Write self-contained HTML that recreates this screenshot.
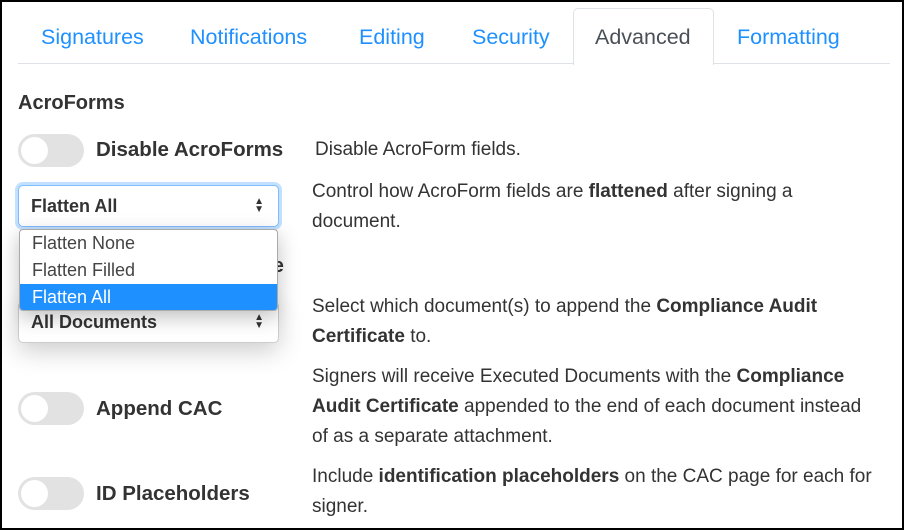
<!DOCTYPE html>
<html><head><style>
*{margin:0;padding:0;box-sizing:border-box}
body{width:907px;height:531px;background:#fff;font-family:"Liberation Sans",sans-serif;color:#212529;position:relative;overflow:hidden}
.frame{position:absolute;left:0;top:0;width:904px;height:530px;border:2px solid #000}
.a{position:absolute;white-space:nowrap}
.tab{font-size:21.5px;color:#1e90ff;top:25px}
.line{position:absolute;left:18px;top:63px;width:872px;height:1px;background:#dee2e6}
.act{position:absolute;left:573px;top:8px;width:141px;height:57px;border:1px solid #dee2e6;border-bottom:none;border-radius:5px 5px 0 0;background:#fff}
.tg{position:absolute;left:18px;width:66px;height:33px;border-radius:17px;background:#e2e2e2}
.tg::after{content:"";position:absolute;left:3px;top:3px;width:27px;height:27px;border-radius:50%;background:#fff}
.lbl{font-size:20.5px;font-weight:bold;color:#333}
.d{font-size:19px;color:#333;line-height:30px}
.sel{position:absolute;left:18px;width:261px;height:42px;border:1px solid #ccc;border-radius:5px;font-size:18px;font-weight:bold;color:#333;padding:10px 12px;background:#fff}
.arr{position:absolute;right:14px;top:12px;font-size:10px;line-height:8px;color:#333}
</style></head><body>
<div class="frame"></div>
<div class="line"></div>
<div class="act"></div>
<div class="a tab" style="left:41px">Signatures</div>
<div class="a tab" style="left:190px">Notifications</div>
<div class="a tab" style="left:359px">Editing</div>
<div class="a tab" style="left:472px">Security</div>
<div class="a tab" style="left:595px;color:#495057">Advanced</div>
<div class="a tab" style="left:737px">Formatting</div>

<div class="a" style="left:18px;top:92px;font-size:20px;font-weight:bold;color:#333">AcroForms</div>
<div class="tg" style="top:134px"></div>
<div class="a lbl" style="left:96px;top:138px">Disable AcroForms</div>
<div class="a d" style="left:315px;top:135px">Disable AcroForm fields.</div>

<div class="sel" style="top:185px;border:1px solid #80bdff;box-shadow:0 0 0 3px #c2e0ff">Flatten All<div class="arr">▲<br>▼</div></div>
<div class="a d" style="left:312px;top:177px">Control how AcroForm fields are <b>flattened</b> after signing a<br>document.</div>

<div class="a" style="left:255px;top:255px;font-size:20px;font-weight:bold;color:#333">ate</div>
<div class="sel" style="top:301px;padding-top:10px;height:42px;box-shadow:0 8px 25px rgba(0,0,0,.2)">All Documents<div class="arr">▲<br>▼</div></div>
<div class="a d" style="left:312px;top:292px">Select which document(s) to append the <b>Compliance Audit</b><br><b>Certificate</b> to.</div>

<div style="position:absolute;left:19px;top:229px;width:259px;height:82px;border:1px solid #aaa;border-radius:4px;background:#fff;font-size:18px;color:#444;overflow:hidden;box-shadow:0 6px 20px rgba(0,0,0,.25)">
<div style="height:27px;padding:3px 0 0 12px">Flatten None</div>
<div style="height:27px;padding:3px 0 0 12px">Flatten Filled</div>
<div style="height:27px;padding:3px 0 0 12px;background:#1e90ff;color:#fff">Flatten All</div>
</div>

<div class="tg" style="top:392px"></div>
<div class="a lbl" style="left:96px;top:397px">Append CAC</div>
<div class="a d" style="left:312px;top:362px">Signers will receive Executed Documents with the <b>Compliance</b><br><b>Audit Certificate</b> appended to the end of each document instead<br>of as a separate attachment.</div>

<div class="tg" style="top:477px"></div>
<div class="a lbl" style="left:96px;top:482px">ID Placeholders</div>
<div class="a d" style="left:312px;top:462px">Include <b>identification placeholders</b> on the CAC page for each for<br>signer.</div>
</body></html>
